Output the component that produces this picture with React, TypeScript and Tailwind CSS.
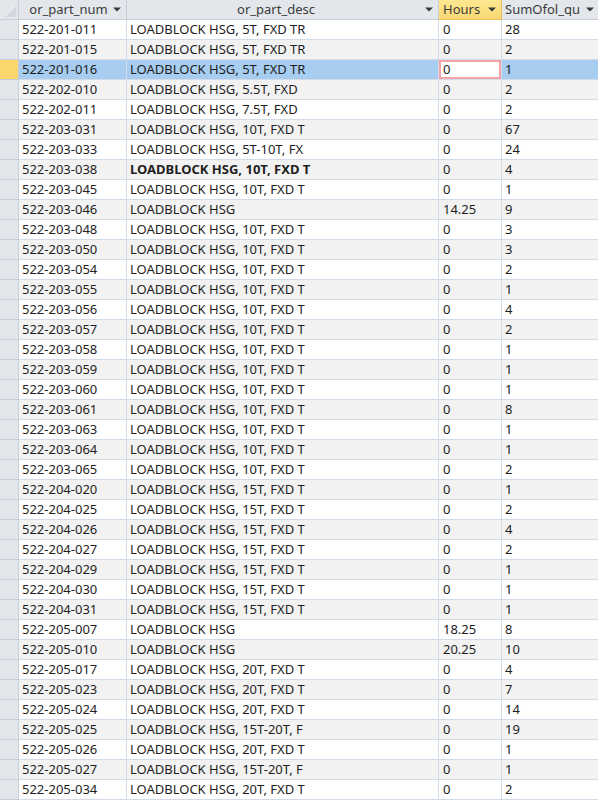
import React from "react";

type Row = [string, string, string, string, boolean?];

const rows: Row[] = [
  ["522-201-011", "LOADBLOCK HSG, 5T, FXD TR", "0", "28"],
  ["522-201-015", "LOADBLOCK HSG, 5T, FXD TR", "0", "2"],
  ["522-201-016", "LOADBLOCK HSG, 5T, FXD TR", "0", "1"],
  ["522-202-010", "LOADBLOCK HSG, 5.5T, FXD", "0", "2"],
  ["522-202-011", "LOADBLOCK HSG, 7.5T, FXD", "0", "2"],
  ["522-203-031", "LOADBLOCK HSG, 10T, FXD T", "0", "67"],
  ["522-203-033", "LOADBLOCK HSG, 5T-10T, FX", "0", "24"],
  ["522-203-038", "LOADBLOCK HSG, 10T, FXD T", "0", "4", true],
  ["522-203-045", "LOADBLOCK HSG, 10T, FXD T", "0", "1"],
  ["522-203-046", "LOADBLOCK HSG", "14.25", "9"],
  ["522-203-048", "LOADBLOCK HSG, 10T, FXD T", "0", "3"],
  ["522-203-050", "LOADBLOCK HSG, 10T, FXD T", "0", "3"],
  ["522-203-054", "LOADBLOCK HSG, 10T, FXD T", "0", "2"],
  ["522-203-055", "LOADBLOCK HSG, 10T, FXD T", "0", "1"],
  ["522-203-056", "LOADBLOCK HSG, 10T, FXD T", "0", "4"],
  ["522-203-057", "LOADBLOCK HSG, 10T, FXD T", "0", "2"],
  ["522-203-058", "LOADBLOCK HSG, 10T, FXD T", "0", "1"],
  ["522-203-059", "LOADBLOCK HSG, 10T, FXD T", "0", "1"],
  ["522-203-060", "LOADBLOCK HSG, 10T, FXD T", "0", "1"],
  ["522-203-061", "LOADBLOCK HSG, 10T, FXD T", "0", "8"],
  ["522-203-063", "LOADBLOCK HSG, 10T, FXD T", "0", "1"],
  ["522-203-064", "LOADBLOCK HSG, 10T, FXD T", "0", "1"],
  ["522-203-065", "LOADBLOCK HSG, 10T, FXD T", "0", "2"],
  ["522-204-020", "LOADBLOCK HSG, 15T, FXD T", "0", "1"],
  ["522-204-025", "LOADBLOCK HSG, 15T, FXD T", "0", "2"],
  ["522-204-026", "LOADBLOCK HSG, 15T, FXD T", "0", "4"],
  ["522-204-027", "LOADBLOCK HSG, 15T, FXD T", "0", "2"],
  ["522-204-029", "LOADBLOCK HSG, 15T, FXD T", "0", "1"],
  ["522-204-030", "LOADBLOCK HSG, 15T, FXD T", "0", "1"],
  ["522-204-031", "LOADBLOCK HSG, 15T, FXD T", "0", "1"],
  ["522-205-007", "LOADBLOCK HSG", "18.25", "8"],
  ["522-205-010", "LOADBLOCK HSG", "20.25", "10"],
  ["522-205-017", "LOADBLOCK HSG, 20T, FXD T", "0", "4"],
  ["522-205-023", "LOADBLOCK HSG, 20T, FXD T", "0", "7"],
  ["522-205-024", "LOADBLOCK HSG, 20T, FXD T", "0", "14"],
  ["522-205-025", "LOADBLOCK HSG, 15T-20T, F", "0", "19"],
  ["522-205-026", "LOADBLOCK HSG, 20T, FXD T", "0", "1"],
  ["522-205-027", "LOADBLOCK HSG, 15T-20T, F", "0", "1"],
  ["522-205-034", "LOADBLOCK HSG, 20T, FXD T", "0", "2"],
];

const Arrow = () => (
  <svg width="8" height="5" viewBox="0 0 8 5" className="shrink-0">
    <path d="M0 0.5 H8 L4 4.5 Z" fill="#3a3a3a" />
  </svg>
);

const cols = "grid grid-cols-[19px_108px_312px_63px_96px]";

export default function App() {
  return (
    <div
      className="w-[598px] h-[801px] overflow-hidden bg-white text-[13px] text-[#1e1e1e]"
      style={{ fontFamily: '"Noto Sans", "Open Sans", sans-serif' }}
    >
      {/* header */}
      <div className={`${cols} h-[20px]`}>
        <div className="relative bg-[#e3e6eb] border-r border-b border-[#c9ced6]">
          <svg width="12" height="12" viewBox="0 0 12 12" className="absolute right-[2px] bottom-[2px]">
            <path d="M12 0 V12 H0 Z" fill="#d3d7de" />
            <path d="M11.5 0.5 L0.5 11.5" stroke="#f2f3f5" strokeWidth="1" />
          </svg>
        </div>
        <div className="flex items-center bg-[#e3e6eb] border-r border-b border-[#c9ced6] text-[#3b3b3b] pl-[5px] pr-[5px]">
          <span className="flex-1 text-center leading-none">or_part_num</span>
          <Arrow />
        </div>
        <div className="flex items-center bg-[#e3e6eb] border-r border-b border-[#c9ced6] text-[#3b3b3b] pr-[5px]">
          <span className="flex-1 text-center leading-none">or_part_desc</span>
          <Arrow />
        </div>
        <div className="flex items-center bg-[linear-gradient(#fde891,#f9d873)] border-r border-b border-[#e6c35a] text-[#3b3b3b] pl-[4px] pr-[5px]">
          <span className="flex-1 leading-none">Hours</span>
          <Arrow />
        </div>
        <div className="flex items-center bg-[#e3e6eb] border-b border-[#c9ced6] text-[#3b3b3b] pl-[3px] pr-[4px] overflow-hidden">
          <span className="flex-1 leading-none whitespace-nowrap overflow-hidden">SumOfol_qu</span>
          <Arrow />
        </div>
      </div>
      {rows.map((r, i) => {
        const sel = i === 2;
        const bg = sel ? "bg-[#a7cdf0]" : i % 2 === 1 ? "bg-[#f2f2f2]" : "bg-white";
        return (
          <div key={i} className={`${cols} h-[20px]`}>
            <div
              className={`border-r border-b border-[#c9ced6] ${sel ? "bg-[#fad86e]" : "bg-[#e3e6eb]"}`}
            />
            <div className={`${bg} border-r border-b border-[#d3dbe8] pl-[3px] flex items-center whitespace-nowrap overflow-hidden leading-none`}>
              {r[0]}
            </div>
            <div
              className={`${bg} border-r border-b border-[#d3dbe8] pl-[3px] flex items-center whitespace-nowrap overflow-hidden leading-none ${r[4] ? "font-bold" : ""}`}
            >
              {r[1]}
            </div>
            {sel ? (
              <div className="bg-[#a7cdf0] border-r border-b border-[#d3dbe8]">
                <div className="h-full bg-white border-2 border-[#f4a3a7] flex items-center pl-[2px] leading-none">
                  {r[2]}
                </div>
              </div>
            ) : (
              <div className={`${bg} border-r border-b border-[#d3dbe8] pl-[4px] flex items-center leading-none`}>
                {r[2]}
              </div>
            )}
            <div className={`${bg} border-b border-[#d3dbe8] pl-[3px] flex items-center leading-none`}>
              {r[3]}
            </div>
          </div>
        );
      })}
    </div>
  );
}
